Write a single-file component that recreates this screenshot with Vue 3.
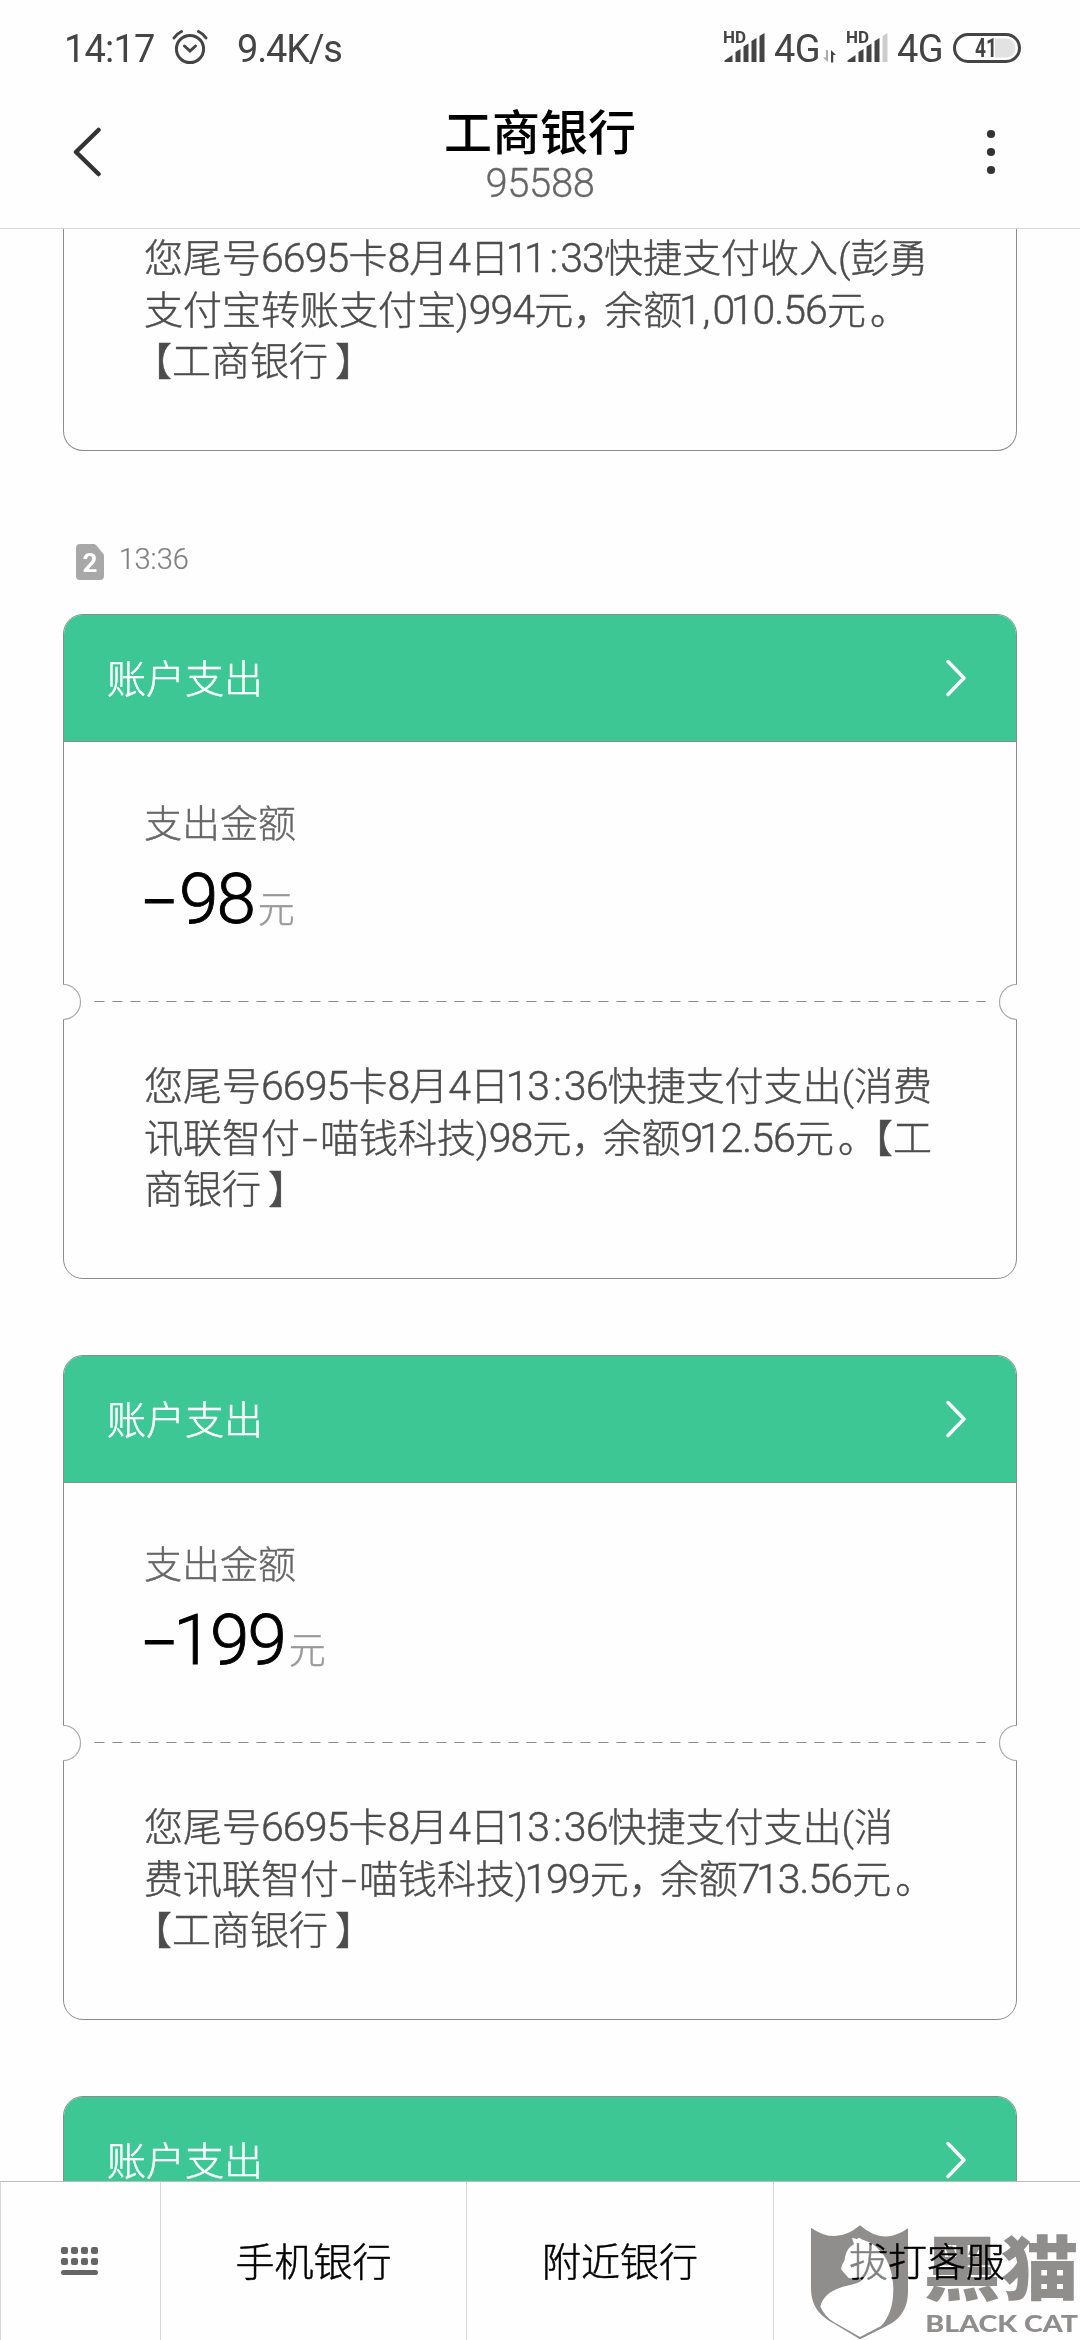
<script setup>
const cards = [
  {
    title: '账户支出',
    label: '支出金额',
    amount: '-98',
    lines: [
      '您尾号6695卡8月4日13:36快捷支付支出(消费',
      '讯联智付-喵钱科技)98元，余额912.56元。【工',
      '商银行】',
    ],
  },
  {
    title: '账户支出',
    label: '支出金额',
    amount: '-199',
    lines: [
      '您尾号6695卡8月4日13:36快捷支付支出(消',
      '费讯联智付-喵钱科技)199元，余额713.56元。',
      '【工商银行】',
    ],
  },
  {
    title: '账户支出',
    lines: [],
  },
]

const previous = [
  '您尾号6695卡8月4日11:33快捷支付收入(彭勇',
  '支付宝转账支付宝)994元，余额1,010.56元。',
  '【工商银行】',
]

const menus = ['手机银行', '附近银行', '拔打客服']

const classes = {
  1: 'one',
  '-': 'dash',
  '(': 'paren',
  ')': 'paren',
  ':': 'colon',
  '.': 'dot',
  ',': 'dot thousands',
  '，': 'comma',
  '。': 'stop',
  '【': 'open',
  '】': 'close',
}

// split a line so that digits and punctuation get their own advance
const tokens = (line) =>
  line
    .split(/([02-9]+|[-1():.,，。【】])/)
    .filter(Boolean)
    .map((text) => ({
      text,
      type: classes[text] || (/\d/.test(text) ? 'num' : 'han'),
    }))
</script>

<template>
  <div class="screen">
    <header class="top">
      <div class="status">
        <span class="clock">14:17</span>
        <svg class="alarm" width="36" height="36" viewBox="0 0 36 36">
          <circle cx="18" cy="20" r="13.6" />
          <path d="M12.5 17l5.5 5 5.5-5M2 9q3-4.500 7.500-6.500M34 9q-3-4.500-7.500-6.500" />
        </svg>
        <span class="speed">9.4K/s</span>

        <div class="right">
          <template v-for="n in 2" :key="n">
            <svg class="signal" width="43" height="32" viewBox="0 0 43 32">
              <text x="0" y="12" textLength="23" lengthAdjust="spacingAndGlyphs">HD</text>
              <path d="M1.500 31v-1.500l8-5.500v7zM12.500 31V21l5-3v13zM20.500 31V15.500l5-3V31zM28.500 31V10l5-3v24z" />
              <path :class="{ off: n === 2 }" d="M36.500 31V5l5-3v29z" />
            </svg>
            <span class="net">4G</span>
            <svg v-if="n === 1" class="arrows" width="13" height="13" viewBox="0 0 13 13">
              <path class="down" d="M3 0h2v12L0 7.500h3z" />
              <path d="M8 12.500V0l5 5h-2.800v7.500z" />
            </svg>
          </template>
          <svg class="battery" width="68" height="30" viewBox="0 0 68 30">
            <path class="level" d="M42 5.500h11a9.500 9.500 0 0 1 0 19H42z" />
            <rect x="1.500" y="1.500" width="65" height="27" rx="13.500" />
            <text x="22" y="24" textLength="22" lengthAdjust="spacingAndGlyphs">41</text>
          </svg>
        </div>
      </div>

      <div class="bar">
        <svg class="back" width="30" height="52" viewBox="0 0 30 52">
          <path d="M25.500 4L3 26l22.500 22" />
        </svg>
        <div class="heading">
          <div class="name">工商银行</div>
          <div class="number">95588</div>
        </div>
        <svg class="more" width="10" height="46" viewBox="0 0 10 46">
          <circle cx="5" cy="5" r="4.100" />
          <circle cx="5" cy="23" r="4.100" />
          <circle cx="5" cy="41" r="4.100" />
        </svg>
      </div>
    </header>

    <main class="messages">
      <section class="card cut">
        <div class="content">
          <p v-for="line in previous" :key="line" class="line">
            <span v-for="(t, i) in tokens(line)" :key="i" :class="t.type">{{ t.text }}</span>
          </p>
        </div>
      </section>

      <div class="meta">
        <svg width="28" height="36" viewBox="0 0 28 36">
          <path d="M4 0h13.500q1.500 0 2.500 1l7 8.500q1 1 1 2.500v20q0 4-4 4H4q-4 0-4-4V4q0-4 4-4z" />
          <text x="14" y="28" text-anchor="middle">2</text>
        </svg>
        <span class="time"
          ><span v-for="(t, i) in tokens('13:36')" :key="i" :class="t.type">{{ t.text }}</span></span
        >
      </div>

      <section v-for="(card, index) in cards" :key="index" class="card">
        <div class="card-head">
          <span class="title">{{ card.title }}</span>
          <svg width="20" height="38" viewBox="0 0 20 38">
            <path d="M2 2.500L18 19 2 35.500" />
          </svg>
        </div>

        <template v-if="card.amount">
          <div class="summary">
            <div class="label">{{ card.label }}</div>
            <div class="amount">
              <span class="value"
                ><span v-for="(t, i) in tokens(card.amount)" :key="i" :class="t.type">{{
                  t.text
                }}</span></span
              ><span class="unit">元</span>
            </div>
          </div>

          <svg class="tear" width="954" height="36" viewBox="0 0 954 36">
            <path class="gap" d="M0 0h2v36H0zM952 0h2v36h-2z" />
            <path class="notch" d="M0 .5a17.500 17.500 0 0 1 0 35M954 .5a17.500 17.500 0 0 0 0 35" />
            <path class="dashes" d="M31.500 17.500h891" />
          </svg>
        </template>

        <div class="content">
          <p v-for="line in card.lines" :key="line" class="line">
            <span v-for="(t, i) in tokens(line)" :key="i" :class="t.type">{{ t.text }}</span>
          </p>
        </div>
      </section>
    </main>

    <nav class="menu">
      <div class="item keyboard">
        <svg width="37" height="28" viewBox="0 0 37 28">
          <template v-for="row in 2" :key="row">
            <rect
              v-for="col in 4"
              :key="col"
              :x="(col - 1) * 10"
              :y="(row - 1) * 11"
              width="7"
              height="7"
              rx="2"
            />
          </template>
          <rect y="23" width="37" height="5" rx="2.500" />
        </svg>
      </div>
      <div v-for="menu in menus" :key="menu" class="item">{{ menu }}</div>
    </nav>

    <svg class="watermark" width="320" height="180" viewBox="0 0 960 540">
      <path
        class="cat"
        d="M274 233l14 6 8-5 10 8c50 14 94 70 94 150 0 50-16 84-38 106l-62 34-85-50q-22-14-34-40c10-40 50-60 90-68 24-5 34-12 42-22l-44 2q-10-12-23-18-4-12 4-24c2-24 10-40 28-50z"
      />
      <g class="ink">
        <path
          fill-rule="evenodd"
          d="M153 203q76 54 147-7 70 62 144 9v188c0 60-30 90-70 108l-74 37-80-48c-50-28-67-60-67-108zM276 233l6 20c-18 10-26 26-28 48q-12 18-10 28l16 18q4 8 12 8l40-3c-6 12-18 18-38 22-50 10-84 28-93 66q14 30 40 46l79 45 62-32c24-24 38-60 38-112 0-74-36-132-92-148l-10-6-8 4z"
        />
        <text class="brand" x="490" y="406" textLength="466" lengthAdjust="spacingAndGlyphs">黑猫</text>
        <text class="latin" x="496" y="517" textLength="458" lengthAdjust="spacingAndGlyphs">BLACK CAT</text>
      </g>
    </svg>
  </div>
</template>

<style>
body {
  background: #fefefe;
}
</style>

<style scoped>
.screen {
  position: relative;
  display: flex;
  flex-direction: column;
  width: 1080px;
  height: 2340px;
  overflow: hidden;
  background: #fefefe;
  color: #4c4c4c;
  font-family: Roboto, 'Noto Sans CJK SC', sans-serif;
  font-weight: 300;
}

svg {
  display: block;
  flex: none;
}

.top {
  flex: none;
  box-sizing: border-box;
  height: 229px;
  border-bottom: 1px solid #d6d6d6;
}

.status {
  display: flex;
  align-items: center;
  height: 76px;
  padding: 22px 59px 0 64px;
  box-sizing: border-box;
  color: #444;
  font-size: 38px;
  font-weight: 400;
  line-height: 54px;
}

.clock {
  width: 108px;
  letter-spacing: -0.8px;
}

.alarm {
  margin-top: -4px;
  fill: none;
  stroke: #444;
  stroke-width: 3;
  stroke-linecap: round;
}

.speed {
  margin-left: 29px;
  letter-spacing: -1.2px;
}

.right {
  display: flex;
  align-items: center;
  margin-left: auto;
}

.signal {
  margin-top: -4px;
  fill: #444;
  overflow: visible;
}

.signal text {
  font-size: 16px;
  font-weight: 700;
}

.off {
  fill: #ccc;
}

.net {
  width: 47px;
  margin-left: 8px;
  letter-spacing: -0.5px;
}

.arrows {
  margin: 14px 10px 0 2px;
  fill: #444;
}

.down {
  fill: #aaa;
}

.battery {
  margin: -2px 0 0 9px;
}

.battery rect {
  fill: none;
  stroke: #444;
  stroke-width: 3;
}

.level {
  fill: #e2e2e2;
}

.battery text {
  fill: #444;
  font-size: 25px;
  font-weight: 700;
}

.bar {
  display: flex;
  align-items: center;
  justify-content: space-between;
  height: 152px;
  padding: 0 84px 0 73px;
}

.back {
  fill: none;
  stroke: #333;
  stroke-width: 4.5;
  stroke-linecap: round;
  stroke-linejoin: round;
}

.heading {
  padding: 7px 9px 0 0;
  text-align: center;
}

.name {
  color: #000;
  font-size: 48px;
  font-weight: 500;
  line-height: 56px;
}

.number {
  color: #666;
  font-size: 40px;
  line-height: 44px;
  letter-spacing: -0.4px;
  -webkit-text-stroke: 0.3px;
}

.more {
  fill: #333;
}

.messages {
  flex: 1;
  min-height: 0;
  overflow: hidden;
  padding: 0 63px;
}

.card {
  box-sizing: border-box;
  height: 665px;
  margin-bottom: 76px;
  border: 1px solid #8c8c8c;
  border-radius: 20px;
}

.cut {
  height: 222px;
  margin-bottom: 0;
  border-top: 0;
  border-radius: 0 0 20px 20px;
}

.card-head {
  display: flex;
  align-items: center;
  justify-content: space-between;
  height: 126px;
  padding: 0 50px 0 43px;
  border-bottom: 1px solid #8c8c8c;
  border-radius: 19px 19px 0 0;
  background: #3dc794;
  color: #fff;
  font-size: 39px;
  -webkit-text-stroke: 0.5px;
}

.title {
  margin-top: -4px;
}

.card-head path {
  fill: none;
  stroke: #fff;
  stroke-width: 3.4;
  stroke-linecap: round;
  stroke-linejoin: round;
}

.summary {
  box-sizing: border-box;
  height: 242px;
  padding: 56px 80px 0;
}

.label {
  color: #666;
  font-size: 38px;
  line-height: 52px;
  -webkit-text-stroke: 0.4px;
}

.amount {
  display: flex;
  align-items: baseline;
  height: 98px;
  line-height: 98px;
}

.value {
  color: #000;
  font-size: 71px;
  letter-spacing: -2px;
  -webkit-text-stroke: 0.9px;
}

.unit {
  margin-left: 4px;
  color: #999;
  font-size: 37px;
  -webkit-text-stroke: 0.4px;
}

.tear {
  margin: 0 -1px;
  fill: none;
}

.gap {
  fill: #fefefe;
}

.notch {
  stroke: #aaa;
  stroke-width: 1.2;
}

.dashes {
  stroke: #8c8c8c;
  stroke-dasharray: 10 8;
}

.content {
  padding: 40px 0 0 80px;
}

.cut .content {
  padding-top: 3px;
}

.line {
  height: 52px;
  margin: 0;
  font-size: 39px;
  line-height: 52px;
  white-space: nowrap;
  -webkit-text-stroke: 0.45px;
}

.line > .num,
.line > .one,
.line > .colon,
.line > .dot {
  font-size: 41px;
  letter-spacing: -0.9px;
}

.one {
  margin: 0 -0.01em 0 -0.08em;
}

.line > .colon {
  margin: 0 3px 0 4px;
}

.line > .thousands {
  margin: 0 3px 0 2px;
}

.dash {
  display: inline-block;
  width: 20px;
  text-align: center;
  transform: scaleX(1.4);
}

.value .dash {
  width: 35px;
  letter-spacing: 0;
  transform: translateX(-2px) scaleX(1.65);
}

.comma,
.stop {
  display: inline-block;
  width: 31px;
}

.stop {
  box-sizing: border-box;
  padding-left: 4px;
}

.open {
  display: inline-flex;
  justify-content: flex-end;
  width: 28px;
}

.close {
  padding-left: 7px;
}

.meta {
  display: flex;
  align-items: center;
  height: 36px;
  margin: 93px 0 34px;
  padding-left: 13px;
}

.meta path {
  fill: #a8a8a8;
}

.meta text {
  fill: #fff;
  font-size: 26px;
  font-weight: 700;
}

.time {
  margin: -7px 0 0 17px;
  color: #808080;
  font-size: 29px;
  -webkit-text-stroke: 0.2px;
}

.menu {
  display: grid;
  flex: none;
  grid-template-columns: 160px 306px 307px 307px;
  box-sizing: border-box;
  height: 159px;
  border-top: 1px solid #bdbdbd;
  background: #fefefe;
}

.item {
  display: flex;
  align-items: center;
  justify-content: center;
  padding-bottom: 5px;
  border-left: 1px solid #d6d6d6;
  color: #000;
  font-size: 39px;
  -webkit-text-stroke: 0.5px;
}

.keyboard {
  padding: 0 2px 0 0;
  fill: #666;
}

.watermark {
  position: absolute;
  right: 0;
  bottom: 0;
}

.ink {
  fill: #918e8e;
  mix-blend-mode: multiply;
}

.cat {
  fill: #fff;
  fill-opacity: 0.5;
}

.brand {
  font-family: 'Noto Sans CJK SC', sans-serif;
  font-size: 212px;
  font-weight: 900;
}

.latin {
  font-family: Lato, sans-serif;
  font-size: 68px;
  font-weight: 900;
}
</style>
